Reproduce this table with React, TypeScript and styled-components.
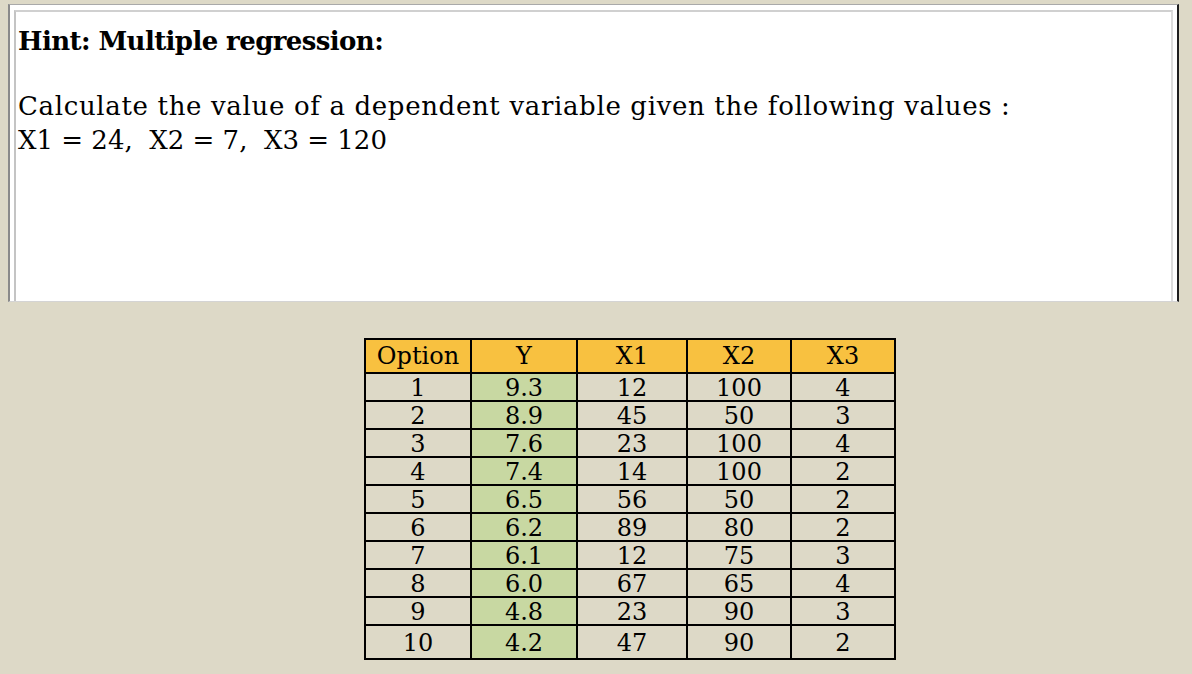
import React from "react";
import styled, { createGlobalStyle } from "styled-components";

const GlobalStyle = createGlobalStyle`
  html, body {
    margin: 0;
    padding: 0;
    background: #ddd9c7;
  }
  body {
    font-family: "DejaVu Serif", serif;
    color: #000;
  }
`;

const Page = styled.div`
  padding: 4px 13px 0 8px;
  min-height: 674px;
  box-sizing: border-box;
`;

const HintPanel = styled.div`
  background: #fff;
  border-top: 1px solid #a9a9a9;
  border-left: 2px solid #8a8a8a;
  border-right: 2px solid #1e1e1e;
  border-bottom: 1px solid #d4d4d4;
  padding: 5px 4px 0 4px;
  height: 298px;
  box-sizing: border-box;
`;

const HintBody = styled.div`
  height: 100%;
  box-sizing: border-box;
  border-top: 2px solid #d0d0d0;
  border-left: 2px solid #c4c4c4;
  border-right: 2px solid #dcdcdc;
  padding: 12px 2px 0 2px;
  font-size: 26px;
  line-height: 34px;
`;

const HintTitle = styled.div`
  font-weight: bold;
  letter-spacing: -0.6px;
  margin-bottom: 31px;
`;

const Line = styled.div<{ $spread?: boolean }>`
  letter-spacing: ${({ $spread }) => ($spread ? "0.66px" : "0")};
`;

const TableWrap = styled.div`
  padding: 36px 0 0 356px;
`;

const DataTable = styled.table`
  border-collapse: collapse;
  table-layout: fixed;
  width: 532px;
  font-family: "DejaVu Serif", serif;
  font-size: 24px;
  border: 2px solid #000;
`;

const HeadCell = styled.th`
  background: #f8c140;
  font-weight: normal;
  height: 32px;
  padding: 0;
  border: 2px solid #000;
  text-align: center;
  line-height: 28px;
`;

const Cell = styled.td<{ $accent?: boolean; $tall?: boolean }>`
  background: ${({ $accent }) => ($accent ? "#c8d8a2" : "transparent")};
  height: ${({ $tall }) => ($tall ? "34px" : "26px")};
  padding: 2px 0 0;
  box-sizing: border-box;
  border: 2px solid #000;
  text-align: center;
  line-height: 24px;
`;

const columns = [
  { label: "Option", width: 106 },
  { label: "Y", width: 106 },
  { label: "X1", width: 110 },
  { label: "X2", width: 104 },
  { label: "X3", width: 104 },
];

const rows: (string | number)[][] = [
  [1, "9.3", 12, 100, 4],
  [2, "8.9", 45, 50, 3],
  [3, "7.6", 23, 100, 4],
  [4, "7.4", 14, 100, 2],
  [5, "6.5", 56, 50, 2],
  [6, "6.2", 89, 80, 2],
  [7, "6.1", 12, 75, 3],
  [8, "6.0", 67, 65, 4],
  [9, "4.8", 23, 90, 3],
  [10, "4.2", 47, 90, 2],
];

export default function App() {
  return (
    <>
      <GlobalStyle />
      <Page>
        <HintPanel>
          <HintBody>
            <HintTitle>Hint: Multiple regression:</HintTitle>
            <Line $spread>Calculate the value of a dependent variable given the following values :</Line>
            <Line>X1 = 24,&nbsp; X2 = 7,&nbsp; X3 = 120</Line>
          </HintBody>
        </HintPanel>
        <TableWrap>
          <DataTable>
            <colgroup>
              {columns.map((c) => (
                <col key={c.label} style={{ width: c.width }} />
              ))}
            </colgroup>
            <thead>
              <tr>
                {columns.map((c) => (
                  <HeadCell key={c.label}>{c.label}</HeadCell>
                ))}
              </tr>
            </thead>
            <tbody>
              {rows.map((r, i) => (
                <tr key={i}>
                  {r.map((v, j) => (
                    <Cell key={j} $accent={j === 1} $tall={i === rows.length - 1}>
                      {v}
                    </Cell>
                  ))}
                </tr>
              ))}
            </tbody>
          </DataTable>
        </TableWrap>
      </Page>
    </>
  );
}
